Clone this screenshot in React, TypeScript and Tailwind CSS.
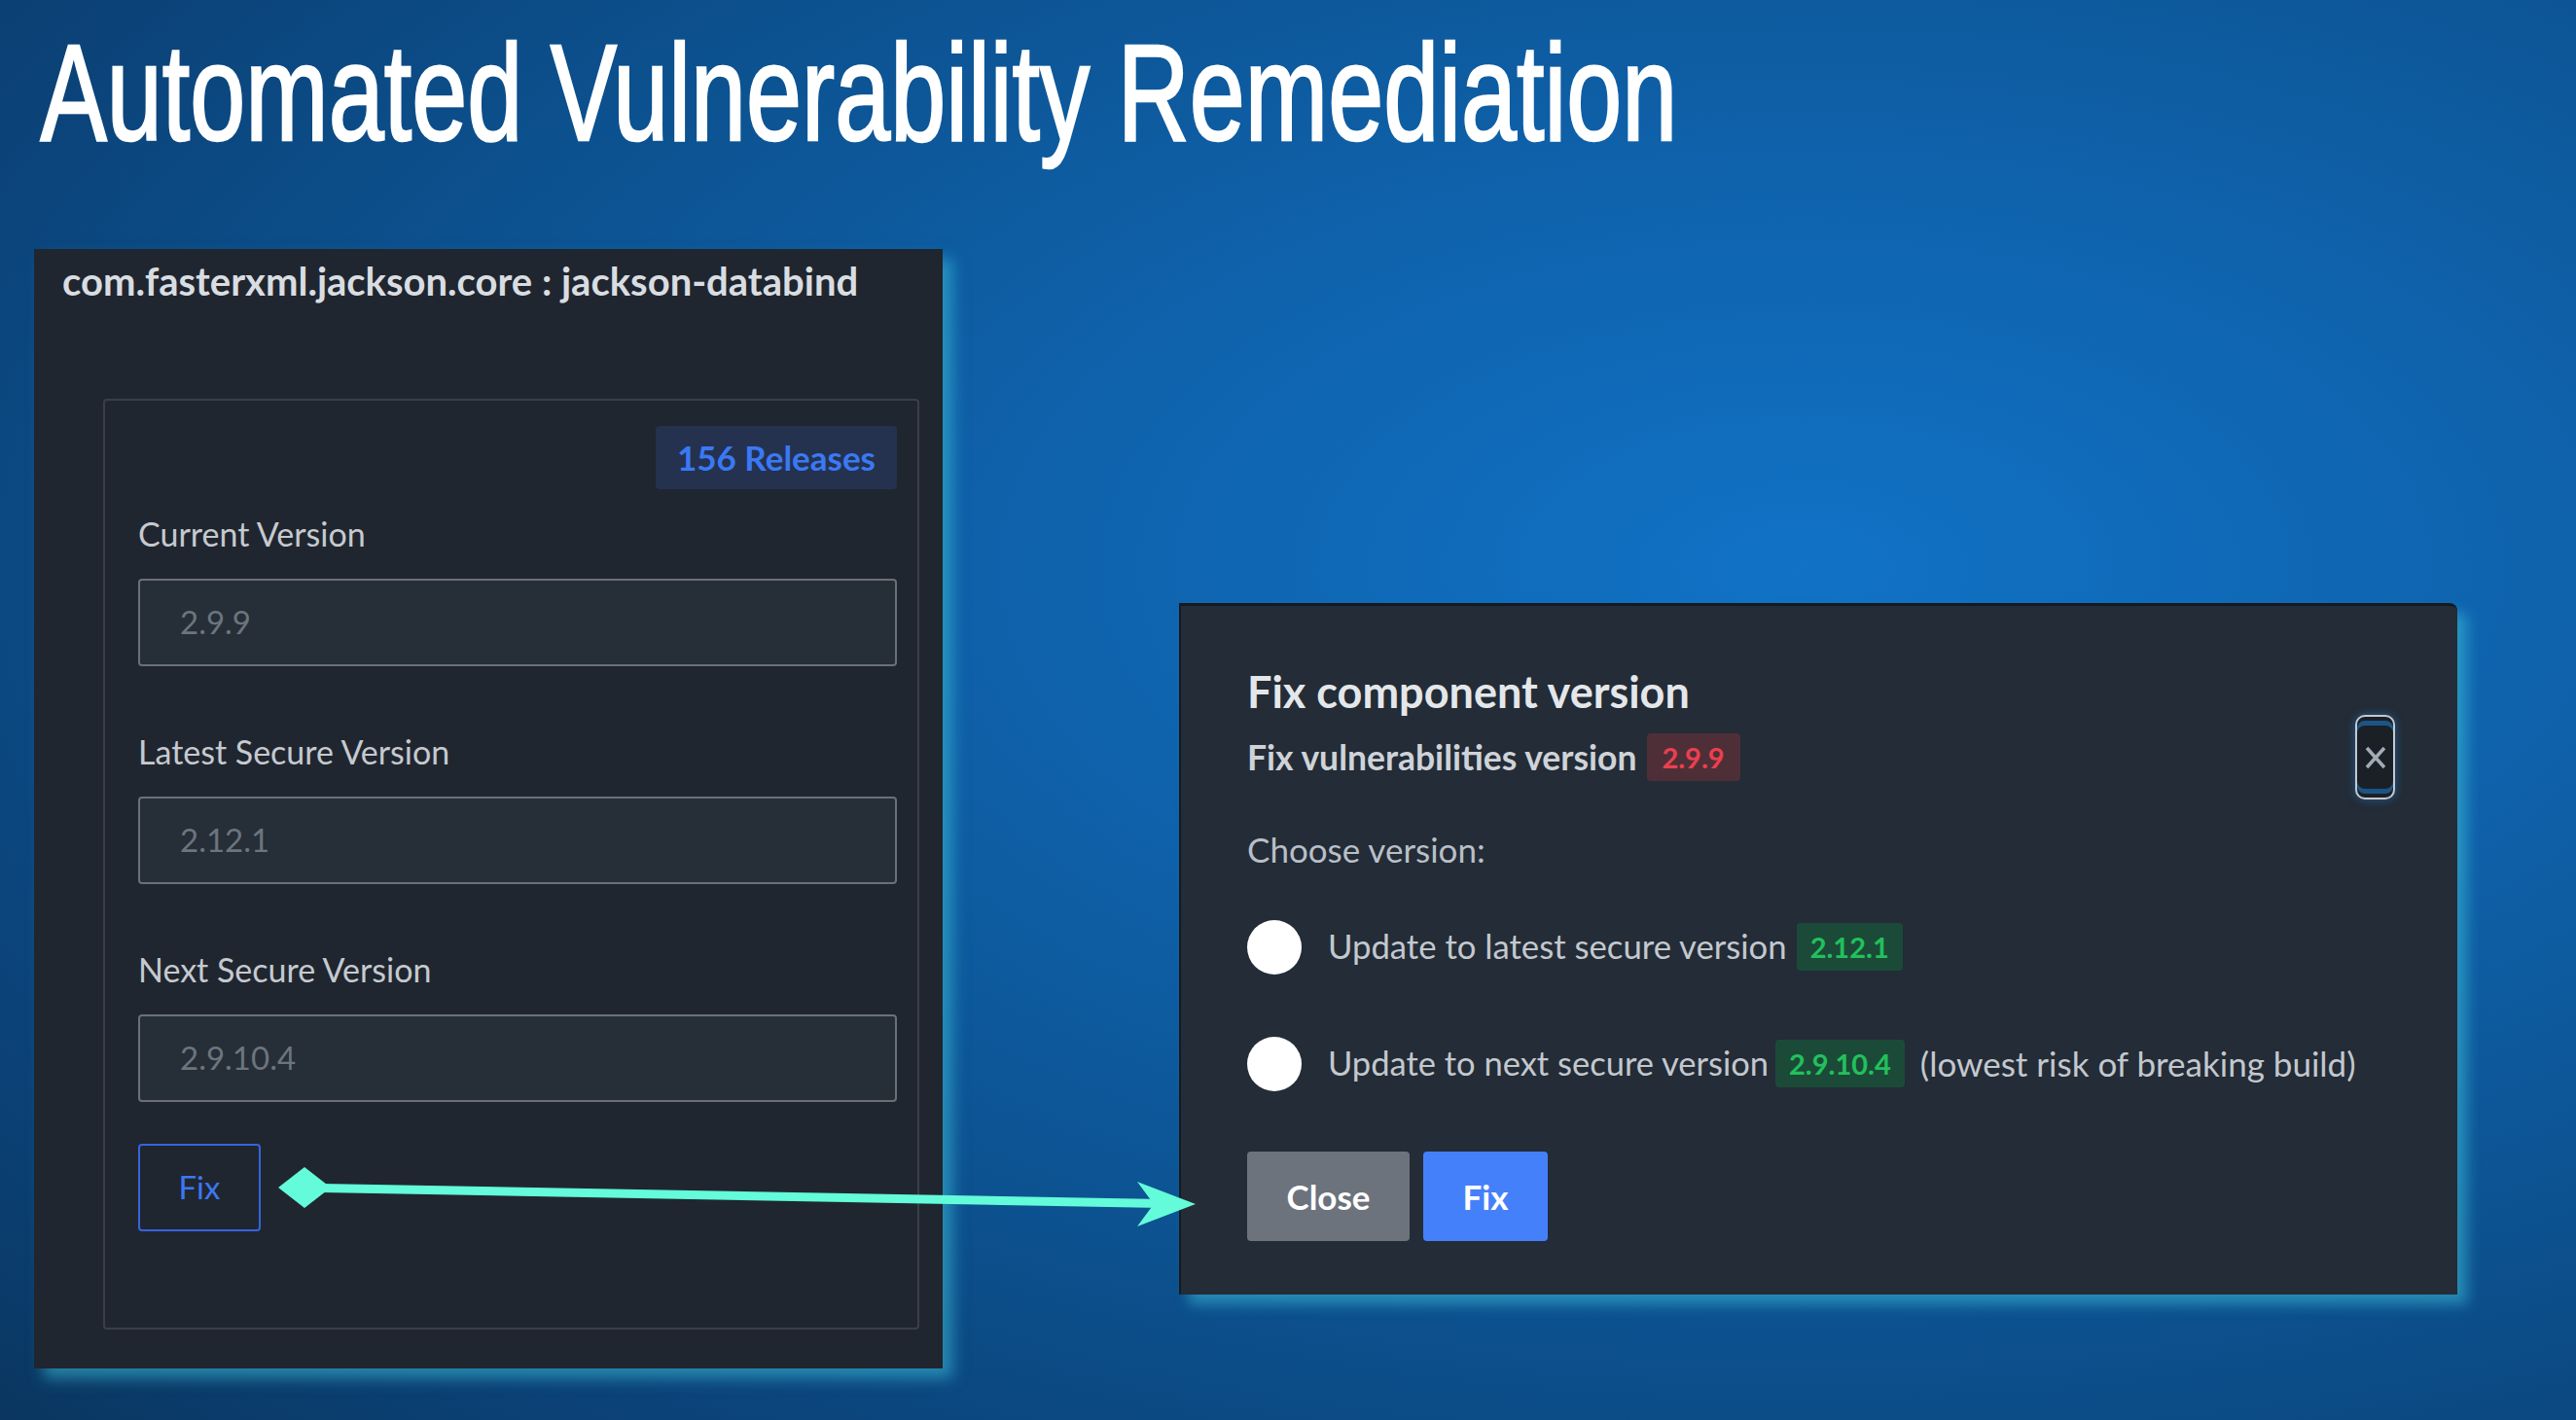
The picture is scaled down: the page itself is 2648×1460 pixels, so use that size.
import React from "react";

function Field({ label, value, first }: { label: string; value: string; first?: boolean }) {
  return (
    <>
      <div className={`${first ? "mt-[29px]" : "mt-[71px]"} text-[34px] leading-none text-[#c5cad0]`}>{label}</div>
      <div className="mt-[29px] h-[90px] w-full rounded-[4px] border-2 border-[#6b7077] bg-[#262e38] flex items-center pl-[41px] text-[33px] text-[#6c757d]">
        {value}
      </div>
    </>
  );
}

function LeftPanel() {
  return (
    <div className="w-[934px] h-[1151px] bg-[#20262f] shadow-[10px_10px_14px_rgba(60,190,215,0.55)] flex flex-col">
      <div className="pl-[29px] pt-[13px] text-[40px] leading-none font-bold text-[#d9dde1] whitespace-nowrap">
        com.fasterxml.jackson.core : jackson-databind
      </div>
      <div className="mt-[101px] ml-[71px] w-[839px] h-[957px] rounded-[4px] border-2 border-[#3a3f47] pl-[34px] pr-[21px] flex flex-col">
        <div className="mt-[26px] flex justify-end">
          <div className="h-[65px] w-[248px] rounded-[4px] bg-[#24324f] flex items-center justify-center text-[35px] font-bold text-[#3b78f4]">
            156 Releases
          </div>
        </div>
        <Field label="Current Version" value="2.9.9" first />
        <Field label="Latest Secure Version" value="2.12.1" />
        <Field label="Next Secure Version" value="2.9.10.4" />
        <div className="mt-[43px] h-[90px] w-[126px] rounded-[4px] border-2 border-[#3565dd] flex items-center justify-center text-[33px] text-[#3b78f4]">
          Fix
        </div>
      </div>
    </div>
  );
}

function Radio() {
  return <div className="h-[56px] w-[56px] shrink-0 rounded-full bg-white" />;
}

function Modal() {
  return (
    <div className="ml-[243px] mt-[364px] w-[1314px] h-[711px] bg-[#232c37] border-t-[3px] border-l-2 border-[#151a20] rounded-tr-[8px] shadow-[10px_10px_14px_rgba(60,190,215,0.55)] flex flex-col pl-[68px] pr-[64px]">
      <div className="flex items-start justify-between">
        <div className="flex flex-col">
          <div className="mt-[66px] text-[45px] leading-none font-bold text-[#e4e7ea]">Fix component version</div>
          <div className="mt-[20px] flex items-center h-[49px]">
            <span className="text-[35.5px] leading-none font-bold text-[#cfd3d8]">Fix vulnerabilities version</span>
            <span className="ml-[10px] h-[49px] w-[96px] rounded-[4px] bg-[#4e2f37] flex items-center justify-center text-[29px] font-bold text-[#ec3f4f]">
              2.9.9
            </span>
          </div>
        </div>
        <div className="mt-[112px] h-[87px] w-[41px] rounded-[10px] border-2 border-[#c4c9cf] bg-[#1b2027] shadow-[0_0_10px_rgba(40,130,210,0.55),inset_0_4px_0_#1b2027,inset_0_9px_0_#1c5585,inset_0_-4px_0_#1b2027,inset_0_-9px_0_#1c5585] flex items-center justify-center">
          <svg width="24" height="26" viewBox="0 0 24 26" fill="none">
            <path d="M3 3L21 23M21 3L3 23" stroke="#a3acb6" strokeWidth="3.5" />
          </svg>
        </div>
      </div>
      <div className="mt-[34px] text-[35px] leading-none text-[#b9bfc6]">Choose version:</div>
      <div className="mt-[54px] h-[57px] flex items-center">
        <Radio />
        <span className="ml-[27px] text-[34.7px] leading-none text-[#c3c8ce]">Update to latest secure version</span>
        <span className="ml-[10px] h-[49px] px-[14px] rounded-[4px] bg-[#1c4a38] flex items-center text-[29px] font-bold text-[#22c05c]">
          2.12.1
        </span>
      </div>
      <div className="mt-[63px] h-[57px] flex items-center">
        <Radio />
        <span className="ml-[27px] text-[34.5px] leading-none text-[#c3c8ce]">Update to next secure version</span>
        <span className="ml-[7px] h-[49px] px-[14px] rounded-[4px] bg-[#1c4a38] flex items-center text-[29px] font-bold text-[#22c05c]">
          2.9.10.4
        </span>
        <span className="ml-[16px] text-[35px] leading-none text-[#c3c8ce]">(lowest risk of breaking build)</span>
      </div>
      <div className="mt-[62px] flex gap-[14px]">
        <div className="h-[92px] w-[167px] rounded-[4px] bg-[#6c737c] flex items-center justify-center text-[35px] font-bold text-white">
          Close
        </div>
        <div className="h-[92px] w-[128px] rounded-[4px] bg-[#4580fb] flex items-center justify-center text-[35px] font-bold text-white">
          Fix
        </div>
      </div>
    </div>
  );
}

export default function App() {
  return (
    <div className="relative w-[2648px] h-[1460px] overflow-hidden bg-[radial-gradient(ellipse_95%_90%_at_70%_40%,#1172c6_0%,#0f63ad_30%,#0c518f_60%,#0b4074_85%,#0a365f_100%)] font-['Lato',sans-serif]">
      <h1 className="pl-[57px] pt-[25px] text-[141px] leading-none font-normal text-white whitespace-nowrap origin-left scale-x-[0.727] [-webkit-text-stroke:2.5px_white] font-['Liberation_Sans',Arial,sans-serif]">
        Automated Vulnerability Remediation
      </h1>
      <div className="mt-[90px] pl-[35px] flex items-start">
        <LeftPanel />
        <Modal />
      </div>
      <svg className="absolute left-0 top-0 pointer-events-none" width="2648" height="1460" viewBox="0 0 2648 1460">
        <polygon points="286,1221 313,1200 340,1221 313,1242" fill="#63fbd9" />
        <line x1="330" y1="1221.5" x2="1195" y2="1237.5" stroke="#63fbd9" strokeWidth="9" />
        <polygon points="1229,1238 1169,1215 1186,1238 1169,1261" fill="#63fbd9" />
      </svg>
    </div>
  );
}
